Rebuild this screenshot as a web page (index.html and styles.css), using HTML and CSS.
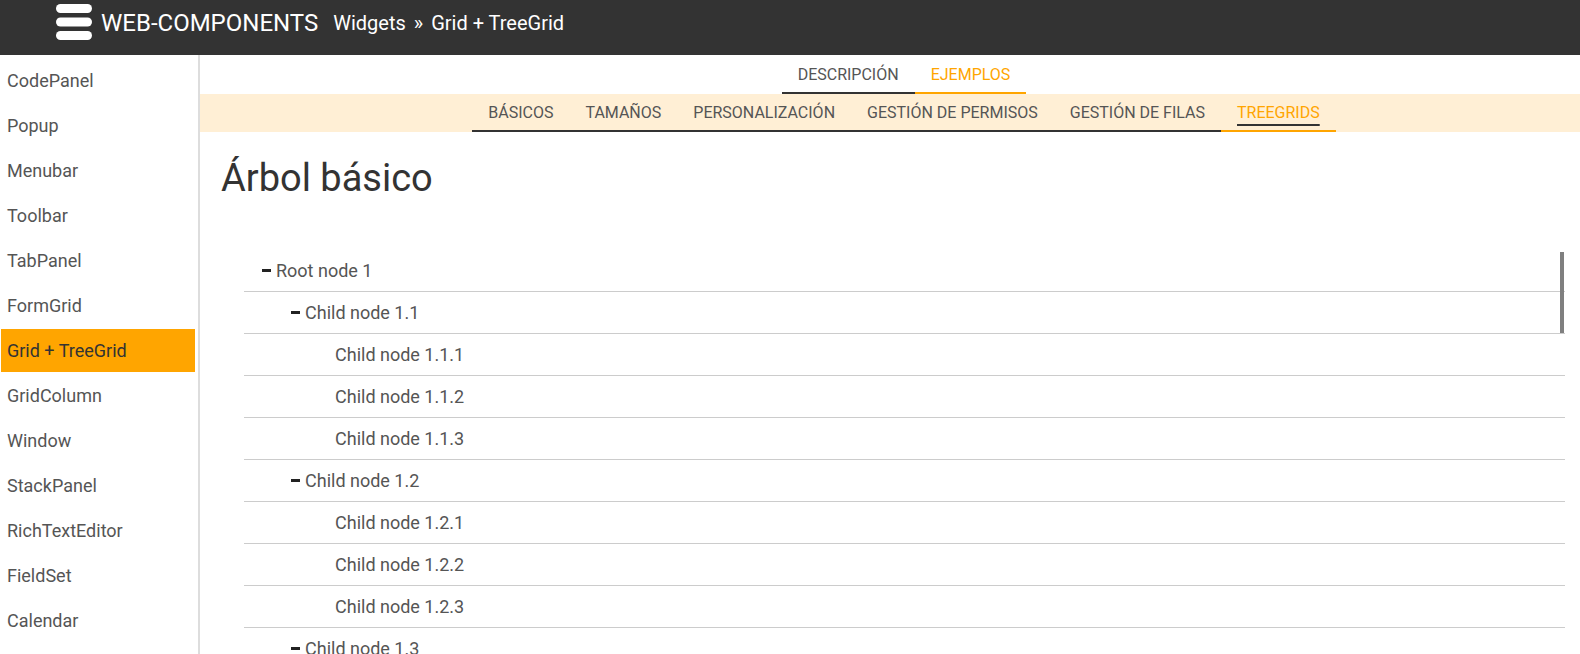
FILE: index.html
```html
<!DOCTYPE html>
<html>
  <head>
    <meta name="viewport" content="width=device-width, initial-scale=1.0" />
    <title>Grid + TreeGrid</title>
    <link rel="stylesheet" href="styles.css">
  </head>
  <body>
    <header class="topbar">
      <svg class="menu-icon" width="36" height="36" viewBox="0 0 36 36">
        <rect x="0" y="0" width="36" height="9" rx="4.5" fill="#fff" />
        <rect x="0" y="13.5" width="36" height="9" rx="4.5" fill="#fff" />
        <rect x="0" y="27" width="36" height="9" rx="4.5" fill="#fff" />
      </svg>
      <span class="brand">WEB-COMPONENTS</span>
      <span class="crumbs">Widgets<span class="sep">&raquo;</span>Grid + TreeGrid</span>
    </header>
    <div class="layout">
      <nav class="sidebar">
        <a class="side-item">CodePanel</a>
        <a class="side-item">Popup</a>
        <a class="side-item">Menubar</a>
        <a class="side-item">Toolbar</a>
        <a class="side-item">TabPanel</a>
        <a class="side-item">FormGrid</a>
        <a class="side-item active">Grid + TreeGrid</a>
        <a class="side-item">GridColumn</a>
        <a class="side-item">Window</a>
        <a class="side-item">StackPanel</a>
        <a class="side-item">RichTextEditor</a>
        <a class="side-item">FieldSet</a>
        <a class="side-item">Calendar</a>
        <a class="side-item">Slider</a>
      </nav>
      <main class="content">
        <div class="tabs">
          <a class="tab">Descripción</a>
          <a class="tab active">Ejemplos</a>
        </div>
        <div class="subtabs">
          <a class="subtab">Básicos</a>
          <a class="subtab">Tamaños</a>
          <a class="subtab">Personalización</a>
          <a class="subtab">Gestión de permisos</a>
          <a class="subtab">Gestión de filas</a>
          <a class="subtab active"><span>TreeGrids</span></a>
        </div>
        <h1 class="title">Árbol básico</h1>
        <div class="tree">
          <div class="row lvl-0"><span class="toggle"></span>Root node 1</div>
          <div class="row lvl-1"><span class="toggle"></span>Child node 1.1</div>
          <div class="row lvl-2"><span class="toggle leaf"></span>Child node 1.1.1</div>
          <div class="row lvl-2"><span class="toggle leaf"></span>Child node 1.1.2</div>
          <div class="row lvl-2"><span class="toggle leaf"></span>Child node 1.1.3</div>
          <div class="row lvl-1"><span class="toggle"></span>Child node 1.2</div>
          <div class="row lvl-2"><span class="toggle leaf"></span>Child node 1.2.1</div>
          <div class="row lvl-2"><span class="toggle leaf"></span>Child node 1.2.2</div>
          <div class="row lvl-2"><span class="toggle leaf"></span>Child node 1.2.3</div>
          <div class="row lvl-1"><span class="toggle"></span>Child node 1.3</div>
          <div class="row lvl-2"><span class="toggle leaf"></span>Child node 1.3.1</div>
          <div class="scroll-thumb"></div>
        </div>
      </main>
    </div>
  </body>
</html>
```

FILE: styles.css
```css
html,
body {
  height: 100%;
  overflow: hidden;
}

body {
  margin: 0;
  font-family: Roboto, "Liberation Sans", sans-serif;
  color: #555;
  background: #fff;
}

a {
  text-decoration: none;
  cursor: pointer;
}

/* top bar */
.topbar {
  display: flex;
  align-items: center;
  height: 55px;
  padding: 0 0 12px 56px;
  box-sizing: border-box;
  background: #333;
  color: #fff;
}

.menu-icon {
  display: block;
  flex: none;
}

.brand {
  margin-left: 9px;
  padding-top: 3px;
  font-size: 24px;
}

.crumbs {
  margin-left: 15px;
  padding-top: 3px;
  font-size: 20px;
}

.crumbs .sep {
  margin: 0 8px;
}

.layout {
  display: flex;
  height: calc(100% - 55px);
}

/* side menu */
.sidebar {
  display: flex;
  flex-direction: column;
  width: 198px;
  flex: none;
  padding-top: 3px;
  border-right: 2px solid #ddd;
}

.side-item {
  display: block;
  flex: none;
  height: 43px;
  line-height: 43px;
  margin: 1px 3px 1px 1px;
  padding-left: 6px;
  font-size: 18px;
  color: #555;
}

.side-item.active {
  background: #ffa500;
  color: #333;
}

/* content */
.content {
  flex: 1;
  min-width: 0;
}

.tabs,
.subtabs {
  display: flex;
  justify-content: center;
  padding-left: 28px;
}

.tab {
  height: 39px;
  line-height: 35px;
  padding: 2px 16px 0;
  box-sizing: border-box;
  border-bottom: 2px solid #333;
  font-size: 16px;
  text-transform: uppercase;
  color: #555;
}

.tab.active {
  color: #ffa500;
  border-bottom-color: #ffa500;
}

.subtabs {
  background: #ffefd5;
}

.subtab {
  height: 38px;
  line-height: 37px;
  padding: 0 16px;
  box-sizing: border-box;
  border-bottom: 2px solid #333;
  font-size: 16px;
  text-transform: uppercase;
  color: #555;
}

.subtab.active {
  color: #ffa500;
  border-bottom-color: #ffa500;
}

.subtab.active span {
  text-decoration: underline;
  text-decoration-color: #333;
  text-decoration-thickness: 2px;
  text-underline-offset: 6px;
}

.title {
  margin: 24px 0 0 21px;
  font-size: 38px;
  font-weight: normal;
  color: #333;
}

/* tree grid */
.tree {
  position: relative;
  margin: 50px 15px 0 44px;
}

.row {
  display: flex;
  align-items: center;
  height: 42px;
  box-sizing: border-box;
  border-bottom: 1px solid #ccc;
  font-size: 18px;
  color: #555;
}

.lvl-0 {
  padding-left: 18px;
}

.lvl-1 {
  padding-left: 47px;
}

.lvl-2 {
  padding-left: 77px;
}

.toggle {
  display: inline-block;
  width: 9px;
  height: 3px;
  margin-right: 5px;
  background: #222;
}

.toggle.leaf {
  background: none;
}

.scroll-thumb {
  position: absolute;
  top: 2px;
  right: 1px;
  width: 4px;
  height: 81px;
  background: #7f7f7f;
}
```
